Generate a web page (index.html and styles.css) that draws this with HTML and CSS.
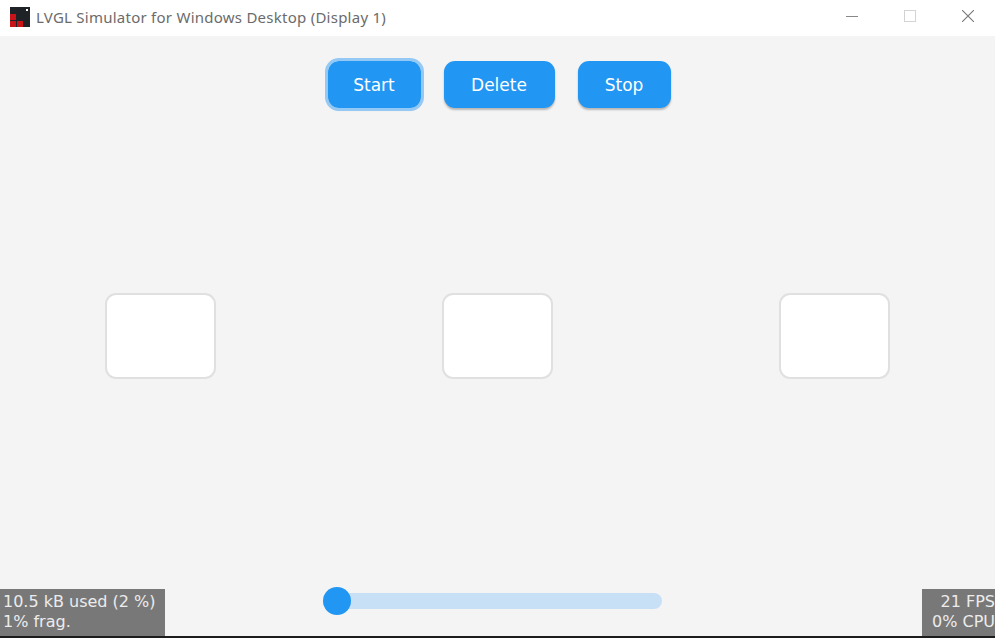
FILE: index.html
```html
<!DOCTYPE html>
<html lang="en">
<head>
  <meta charset="UTF-8">
  <title>LVGL Simulator for Windows Desktop (Display 1)</title>
  <link rel="stylesheet" href="styles.css">
</head>
<body>
  <div class="titlebar">
    <svg class="app-icon" width="20" height="20" viewBox="0 0 20 20">
      <rect x="0" y="0" width="20" height="20" fill="#1f2327"/>
      <rect x="0" y="7" width="6" height="6" fill="#c81418"/>
      <rect x="0" y="14" width="6" height="6" fill="#c81418"/>
      <rect x="7" y="14" width="6" height="6" fill="#c81418"/>
      <rect x="16" y="2" width="2" height="2" fill="#ffffff"/>
    </svg>
    <span class="title">LVGL Simulator for Windows Desktop (Display 1)</span>
    <div class="controls">
      <svg width="12" height="12" viewBox="0 0 12 12"><line x1="0" y1="6.5" x2="12" y2="6.5" stroke="#888" stroke-width="1"/></svg>
      <svg width="12" height="12" viewBox="0 0 12 12"><rect x="0.5" y="0.5" width="11" height="11" fill="none" stroke="#d4d4d4" stroke-width="1"/></svg>
      <svg width="12" height="12" viewBox="0 0 12 12"><path d="M0 0 L12 12 M12 0 L0 12" stroke="#777" stroke-width="1.1"/></svg>
    </div>
  </div>

  <div class="screen">
    <div class="btn-row">
      <button class="btn btn-focused">Start</button>
      <button class="btn btn-wide">Delete</button>
      <button class="btn">Stop</button>
    </div>

    <div class="box-row">
      <div class="box"></div>
      <div class="box"></div>
      <div class="box"></div>
    </div>

    <div class="slider">
      <div class="knob"></div>
    </div>

    <div class="monitor monitor-left">10.5 kB used (2 %)<br>1% frag.</div>
    <div class="monitor monitor-right">21 FPS<br>0% CPU</div>
  </div>
  <div class="edge"></div>
</body>
</html>
```

FILE: styles.css
```css
body {
  margin: 0;
  width: 995px;
  height: 638px;
  overflow: hidden;
  background: #f4f4f4;
  font-family: "DejaVu Sans", sans-serif;
}

.titlebar {
  height: 36px;
  background: #ffffff;
  display: flex;
  align-items: center;
  padding-left: 10px;
  box-sizing: border-box;
}
.app-icon { margin-top: -2px; }
.title {
  margin-left: 6px;
  margin-top: -2px;
  font-family: "Noto Sans", sans-serif;
  font-size: 15px;
  letter-spacing: 0.25px;
  color: #6b6b6b;
}
.controls {
  margin-left: auto;
  display: flex;
  gap: 46px;
  padding-right: 21px;
  margin-top: -4px;
}

.screen {
  position: relative;
  height: 600px;
  background: #f4f4f4;
}

.btn-row {
  display: flex;
  justify-content: center;
  gap: 23px;
  padding-top: 25px;
  padding-left: 3px;
}
.btn {
  width: 93px;
  height: 47px;
  border: none;
  border-radius: 11px;
  background: #2196f3;
  color: #ffffff;
  font-family: "DejaVu Sans", sans-serif;
  font-size: 17px;
  box-shadow: 0 2px 2px rgba(0, 0, 0, 0.25);
  padding: 0;
}
.btn-wide { width: 111px; }
.btn-focused {
  outline: 3px solid #93c9f4;
  outline-offset: 0;
}

.box-row {
  display: flex;
  gap: 226px;
  padding-left: 105px;
  margin-top: 185px;
}
.box {
  width: 111px;
  height: 86px;
  box-sizing: border-box;
  background: #ffffff;
  border: 2px solid #e0e0e0;
  border-radius: 11px;
}

.slider {
  position: relative;
  margin: 214px 0 0 337px;
  width: 325px;
  height: 16px;
  border-radius: 8px;
  background: #c8e0f5;
}
.knob {
  position: absolute;
  left: -14px;
  top: -6px;
  width: 28px;
  height: 28px;
  border-radius: 50%;
  background: #2196f3;
}

.monitor {
  position: absolute;
  bottom: 0;
  height: 47px;
  box-sizing: border-box;
  padding: 3px 3px 0;
  background: #787878;
  color: #ececec;
  font-family: "DejaVu Sans", sans-serif;
  font-size: 16px;
  line-height: 20px;
  white-space: nowrap;
}
.monitor-left { left: 0; width: 165px; }
.monitor-right { right: 0; width: 73px; text-align: right; padding-right: 0; }

.edge {
  height: 2px;
  background: #1c1c1c;
}
```
